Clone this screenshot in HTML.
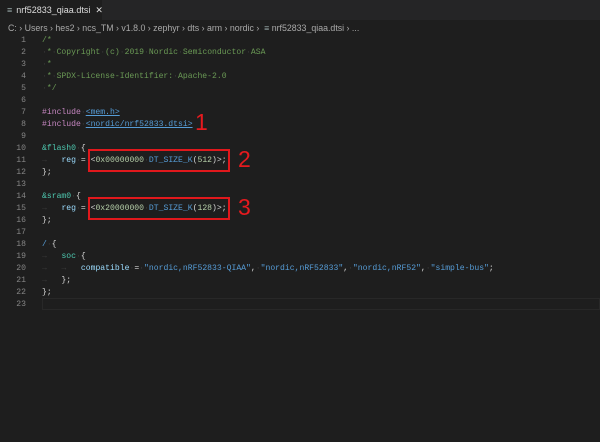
<!DOCTYPE html>
<html><head><style>
body{margin:0;width:600px;height:442px;background:#1e1e1e;overflow:hidden;position:relative;font-family:"Liberation Sans",sans-serif}
.tabbar{position:absolute;left:0;top:0;width:600px;height:20px;background:#252526}
.tab{position:absolute;left:0;top:0;width:102px;height:20px;background:#1e1e1e;color:#ddd;font-size:9px;line-height:20px;white-space:nowrap}
.bc{position:absolute;left:8px;top:22px;color:#a9a9a9;font-size:8.8px;line-height:12px;white-space:pre}
.ln{position:absolute;left:0;width:26px;text-align:right;color:#858585;font:8.1px/12px "Liberation Mono",monospace}
.ln.cur{color:#c6c6c6}
.code{position:absolute;left:42px;font:8.1px/12px "Liberation Mono",monospace;white-space:pre;color:#d4d4d4}
.c{color:#6a9955}.k{color:#c586c0}.s{color:#ce9178}.inc{color:#569cd6;text-decoration:underline}
.t{color:#4ec9b0}.v{color:#9cdcfe}.b{color:#569cd6}.n{color:#b5cea8}.q{color:#569cd6}.d{color:#3c3c3c}
.box{position:absolute;border:2px solid #e0181c}
.num{position:absolute;color:#e61a1e;font-size:23px;font-family:"Liberation Sans",sans-serif}
.curline{position:absolute;left:42px;top:298px;width:558px;height:12px;border:1px solid #282828;box-sizing:border-box}
</style></head><body>
<div class="tabbar"><div class="tab"><span style="color:#9aa;margin:0 4px 0 7px">≡</span>nrf52833_qiaa.dtsi<span style="margin-left:5px">✕</span></div></div>
<div class="bc">C: › Users › hes2 › ncs_TM › v1.8.0 › zephyr › dts › arm › nordic ›  <span style="color:#9aa">≡</span> nrf52833_qiaa.dtsi › ...</div>
<div class="curline"></div>
<div style="position:absolute;top:35px;left:0">
<div class="ln" style="top:0">1<br>2<br>3<br>4<br>5<br>6<br>7<br>8<br>9<br>10<br>11<br>12<br>13<br>14<br>15<br>16<br>17<br>18<br>19<br>20<br>21<br>22<br><span class="cur">23</span></div>
<div class="code" style="top:0"><span class="c">/*
<span class="d">·</span>*<span class="d">·</span>Copyright<span class="d">·</span>(c)<span class="d">·</span>2019<span class="d">·</span>Nordic<span class="d">·</span>Semiconductor<span class="d">·</span>ASA
<span class="d">·</span>*
<span class="d">·</span>*<span class="d">·</span>SPDX-License-Identifier:<span class="d">·</span>Apache-2.0
<span class="d">·</span>*/</span>

<span class="k">#include</span><span class="d">·</span><span class="inc">&lt;mem.h&gt;</span>
<span class="k">#include</span><span class="d">·</span><span class="inc">&lt;nordic/nrf52833.dtsi&gt;</span>

<span class="t">&amp;flash0</span><span class="d">·</span>{
<span class="d">→</span>   <span class="v">reg</span><span class="d">·</span>=<span class="d">·</span>&lt;<span class="n">0x00000000</span><span class="d">·</span><span class="b">DT_SIZE_K</span>(<span class="n">512</span>)&gt;;
};

<span class="t">&amp;sram0</span><span class="d">·</span>{
<span class="d">→</span>   <span class="v">reg</span><span class="d">·</span>=<span class="d">·</span>&lt;<span class="n">0x20000000</span><span class="d">·</span><span class="b">DT_SIZE_K</span>(<span class="n">128</span>)&gt;;
};

<span class="b">/</span><span class="d">·</span>{
<span class="d">→</span>   <span class="t">soc</span><span class="d">·</span>{
<span class="d">→   →</span>   <span class="v">compatible</span><span class="d">·</span>=<span class="d">·</span><span class="q">"nordic,nRF52833-QIAA"</span>,<span class="d">·</span><span class="q">"nordic,nRF52833"</span>,<span class="d">·</span><span class="q">"nordic,nRF52"</span>,<span class="d">·</span><span class="q">"simple-bus"</span>;
<span class="d">→</span>   };
};
</div></div>
<div class="box" style="left:88px;top:149px;width:138px;height:19px"></div>
<div class="box" style="left:88px;top:197px;width:138px;height:19px"></div>
<div class="num" style="left:195px;top:109px">1</div>
<div class="num" style="left:238px;top:146px">2</div>
<div class="num" style="left:238px;top:194px">3</div>
</body></html>
